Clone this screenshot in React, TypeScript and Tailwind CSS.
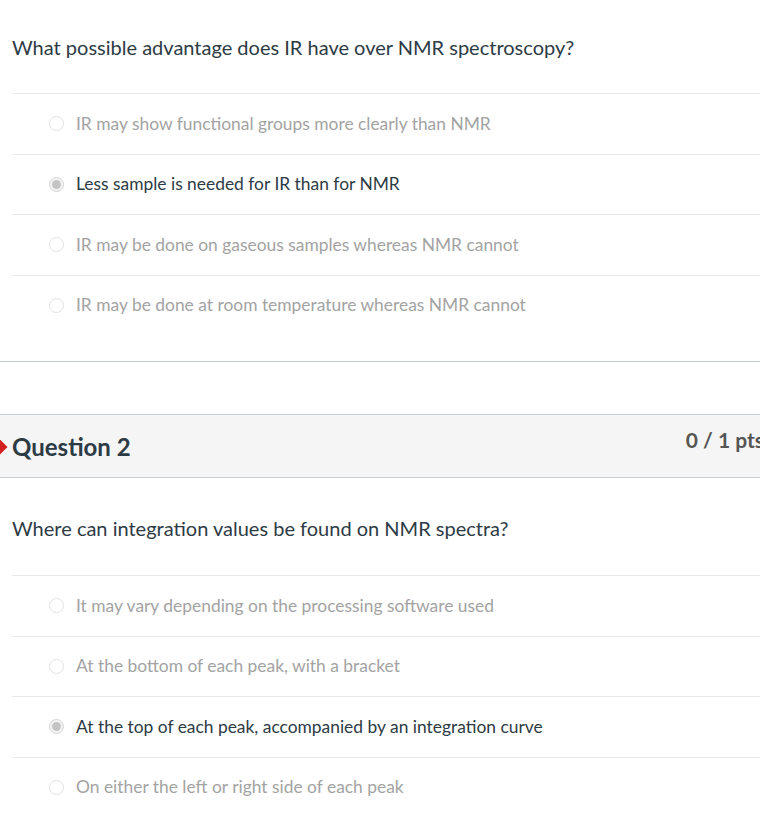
const q1 = {
  text: "What possible advantage does IR have over NMR spectroscopy?",
  answers: [
    "IR may show functional groups more clearly than NMR",
    "Less sample is needed for IR than for NMR",
    "IR may be done on gaseous samples whereas NMR cannot",
    "IR may be done at room temperature whereas NMR cannot",
  ],
  selected: 1,
};

const q2 = {
  text: "Where can integration values be found on NMR spectra?",
  answers: [
    "It may vary depending on the processing software used",
    "At the bottom of each peak, with a bracket",
    "At the top of each peak, accompanied by an integration curve",
    "On either the left or right side of each peak",
  ],
  selected: 2,
};

function Radio({ checked }: { checked: boolean }) {
  if (checked) {
    return (
      <span className="w-[15px] h-[15px] rounded-full border border-[#d4d4d4] bg-[#f4f4f4] flex items-center justify-center">
        <span className="w-[9px] h-[9px] rounded-full bg-[#c4c4c4]" />
      </span>
    );
  }
  return <span className="w-[15px] h-[15px] rounded-full border border-[#e2e2e2] bg-white" />;
}

function Answers({ answers, selected }: { answers: string[]; selected: number }) {
  return (
    <div className="ml-[12px]">
      {answers.map((a, i) => (
        <div key={i} className="h-[60.5px] border-t border-[#e8e8e8] flex items-center">
          <div className="ml-[37px] mr-[12px] flex items-center">
            <Radio checked={i === selected} />
          </div>
          <span className={i === selected ? "text-[17.4px] text-[#2d3b45]" : "text-[17.4px] text-[#a3a3a3]"}>{a}</span>
        </div>
      ))}
    </div>
  );
}

export default function App() {
  return (
    <div className="w-[760px] h-[833px] overflow-hidden bg-white" style={{ fontFamily: "Lato, 'Open Sans', sans-serif" }}>
      <div className="w-[800px]">
        <div className="border-b border-[#c7cdd1] pb-[26px]">
          <div className="pt-[34px] pl-[12px] h-[93px] text-[20px] leading-[26px] text-[#2d3b45]">{q1.text}</div>
          <Answers answers={q1.answers} selected={q1.selected} />
        </div>

        <div className="mt-[52px] relative border-t border-b border-[#c7cdd1] bg-[#f5f5f5] h-[64px] flex items-center justify-between pl-[12px] pr-[36px]">
          <span className="absolute left-[-7px] top-[26px] w-[12px] h-[12px] bg-[#d2201f] rotate-45" />
          <span className="text-[24px] font-bold text-[#2d3b45] mt-[2px]">Question 2</span>
          <span className="text-[21px] font-bold text-[#555] mb-[12px]">0 / 1 pts</span>
        </div>

        <div className="pt-[37px] pl-[12px] h-[97px] text-[20px] leading-[26px] text-[#2d3b45]">{q2.text}</div>
        <Answers answers={q2.answers} selected={q2.selected} />
      </div>
    </div>
  );
}
